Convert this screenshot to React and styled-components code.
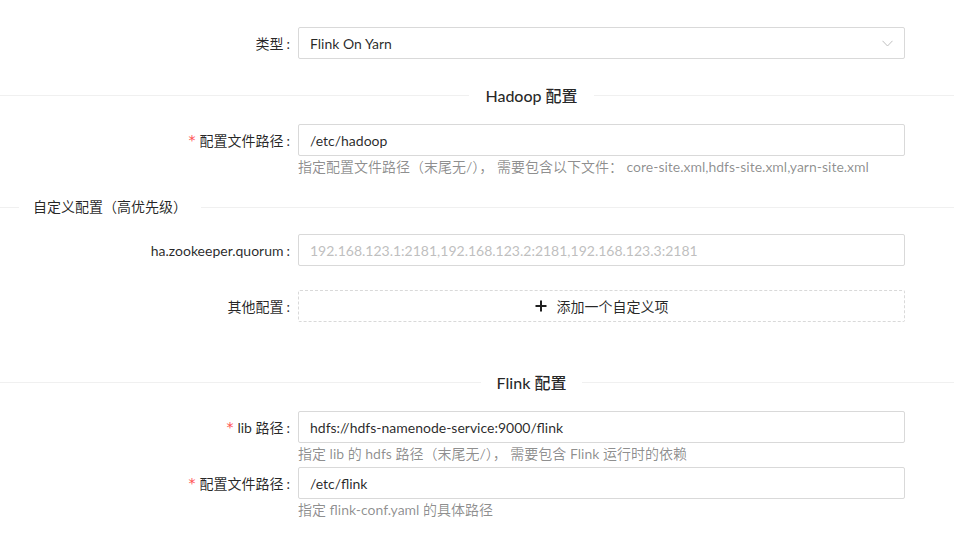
import React from "react";
import styled, { createGlobalStyle, css } from "styled-components";

const GlobalStyle = createGlobalStyle`
  html, body {
    margin: 0;
    padding: 0;
    background: #fff;
    overflow: hidden;
  }

  body {
    font-family: Lato, "Noto Sans CJK SC", sans-serif;
    font-size: 14px;
    color: rgba(0, 0, 0, 0.85);
  }
`;

const Form = styled.div`
  width: 1063px;
  padding-top: 27px;
`;

const Item = styled.div`
  display: grid;
  grid-template-columns: 298px 607px;
  margin-bottom: ${p => (p.$help ? 0 : 24)}px;
`;

const Label = styled.label`
  display: flex;
  align-items: center;
  justify-content: flex-end;
  height: 32px;
  white-space: nowrap;
  color: rgba(0, 0, 0, 0.85);

  ${p =>
    p.$required &&
    css`
      &::before {
        content: "*";
        color: #ff4d4f;
        margin-right: 4px;
        font-size: 14px;
        font-family: "DejaVu Sans", sans-serif;
      }
    `}

  &::after {
    content: ":";
    margin: 0 8px 0 3px;
  }
`;

const Input = styled.input`
  box-sizing: border-box;
  width: 100%;
  height: 32px;
  margin: 0;
  padding: 4px 11px;
  border: 1px solid #d9d9d9;
  border-radius: 2px;
  outline: none;
  font: inherit;
  color: rgba(0, 0, 0, 0.85);
  background: #fff;

  &::placeholder {
    color: #bfbfbf;
  }
`;

const Select = styled.div`
  box-sizing: border-box;
  height: 32px;
  padding: 0 11px;
  border: 1px solid #d9d9d9;
  border-radius: 2px;
  display: flex;
  align-items: center;
  justify-content: space-between;

  svg {
    flex: none;
  }
`;

const Help = styled.div`
  grid-column: 2;
  min-height: 24px;
  line-height: 22px;
  color: rgba(0, 0, 0, 0.45);
  white-space: nowrap;
`;

const DashedButton = styled.button`
  box-sizing: border-box;
  height: 32px;
  border: 1px dashed #d9d9d9;
  border-radius: 2px;
  background: #fff;
  font: inherit;
  color: rgba(0, 0, 0, 0.85);
  display: flex;
  align-items: center;
  justify-content: center;
  gap: 10px;
  padding: 0;
`;

const Divider = styled.div`
  display: flex;
  align-items: center;
  white-space: nowrap;
  margin: ${p => p.$top || 0}px 0 16px;
  font-size: ${p => (p.$plain ? 14 : 16)}px;
  font-weight: ${p => (p.$plain ? 400 : 500)};
  line-height: ${p => (p.$plain ? 22 : 25)}px;
  color: rgba(0, 0, 0, 0.85);

  &::before,
  &::after {
    content: "";
    flex: 1;
    border-top: 1px solid #f0f0f0;
  }

  ${p =>
    p.$left &&
    css`
      &::before {
        flex: 0 0 19px;
      }
    `}
`;

const DividerText = styled.span`
  padding: 0 1em;
`;

function Chevron() {
  return (
    <svg width="11" height="7" viewBox="0 0 11 7">
      <polyline points="0.5,0.8 5.5,6 10.5,0.8" fill="none" stroke="#bfbfbf" strokeWidth="1" />
    </svg>
  );
}

function PlusIcon() {
  return (
    <svg width="12" height="12" viewBox="0 0 12 12">
      <path d="M6 0.5v11M0.5 6h11" stroke="#1f1f1f" strokeWidth="2" />
    </svg>
  );
}

export default function App() {
  return (
    <>
      <GlobalStyle />
      <Form>
        <Item>
          <Label>类型</Label>
          <Select>
            <span>Flink On Yarn</span>
            <Chevron />
          </Select>
        </Item>

        <Divider>
          <DividerText>Hadoop 配置</DividerText>
        </Divider>

        <Item $help>
          <Label $required>配置文件路径</Label>
          <Input readOnly value="/etc/hadoop" />
          <Help>指定配置文件路径（末尾无/）， 需要包含以下文件： core-site.xml,hdfs-site.xml,yarn-site.xml</Help>
        </Item>

        <Divider $plain $left $top={16}>
          <DividerText>自定义配置（高优先级）</DividerText>
        </Divider>

        <Item>
          <Label>ha.zookeeper.quorum</Label>
          <Input readOnly placeholder="192.168.123.1:2181,192.168.123.2:2181,192.168.123.3:2181" />
        </Item>

        <Item>
          <Label>其他配置</Label>
          <DashedButton>
            <PlusIcon />
            <span>添加一个自定义项</span>
          </DashedButton>
        </Item>

        <Divider $top={48}>
          <DividerText>Flink 配置</DividerText>
        </Divider>

        <Item $help>
          <Label $required>lib 路径</Label>
          <Input readOnly value="hdfs://hdfs-namenode-service:9000/flink" />
          <Help>指定 lib 的 hdfs 路径（末尾无/）， 需要包含 Flink 运行时的依赖</Help>
        </Item>

        <Item $help>
          <Label $required>配置文件路径</Label>
          <Input readOnly value="/etc/flink" />
          <Help>指定 flink-conf.yaml 的具体路径</Help>
        </Item>
      </Form>
    </>
  );
}
